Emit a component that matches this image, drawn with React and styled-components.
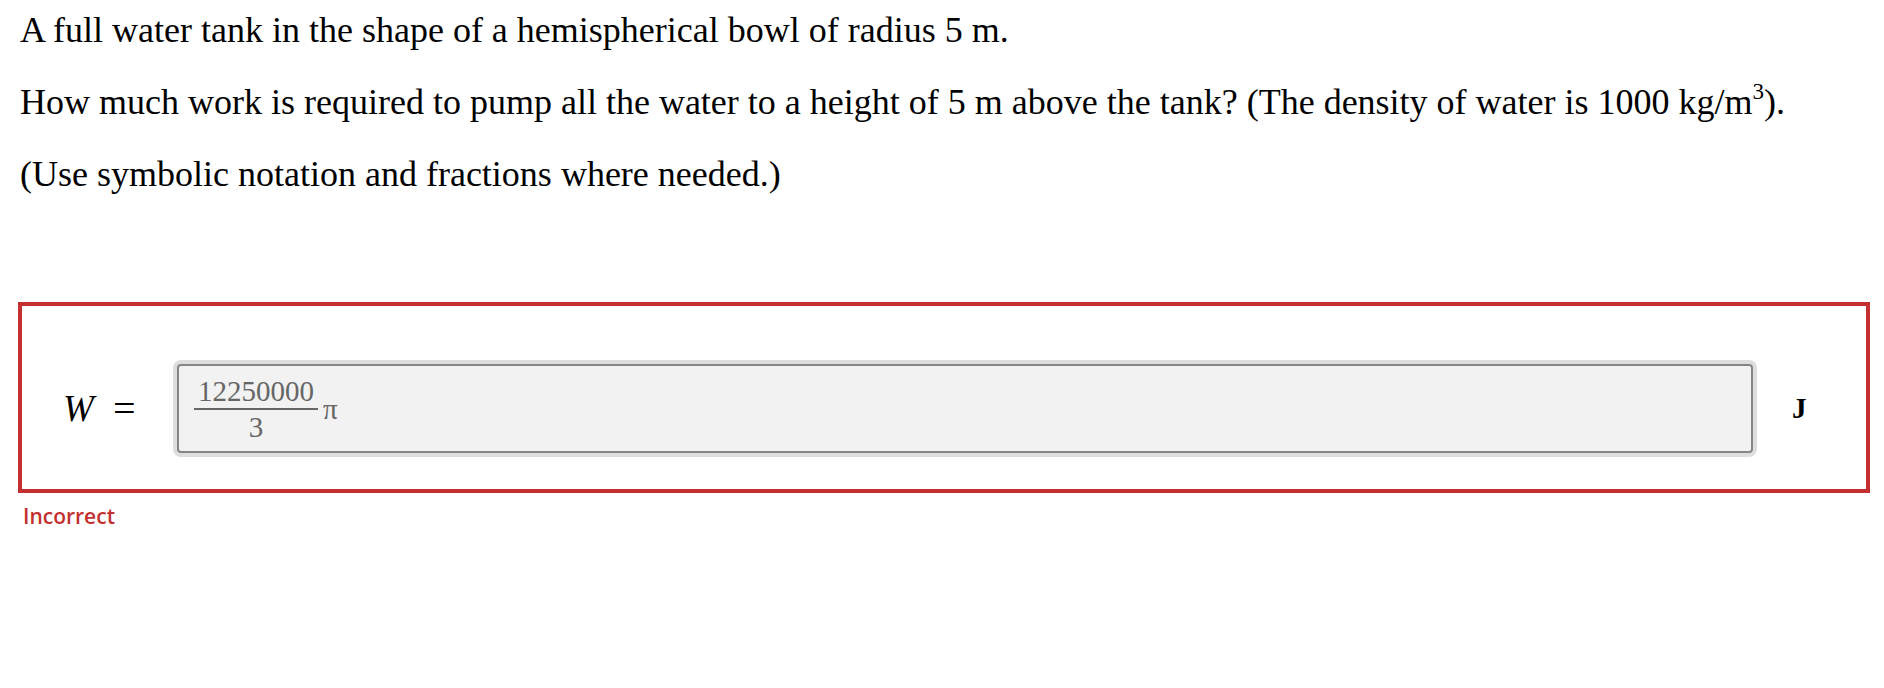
import styled, { createGlobalStyle } from "styled-components";

const GlobalStyle = createGlobalStyle`
  html, body {
    margin: 0;
    padding: 0;
    background: #fff;
  }
`;

const Page = styled.main`
  padding: 10px 14px 40px 18px;
  font-family: "Liberation Serif", "Times New Roman", serif;
  color: #000;
`;

const Question = styled.p`
  margin: 0 0 32px 2px;
  font-size: 36px;
  line-height: 40px;

  sup {
    font-size: 23px;
    line-height: 0;
    vertical-align: 15px;
  }
`;

const AnswerBox = styled.section`
  margin-top: 108px;
  border: 4px solid #c3302f;
  padding: 58px 0 36px 41px;
  display: flex;
  align-items: center;
`;

const MathLabel = styled.span`
  font-size: 37px;
  font-style: italic;
  width: 50px;
`;

const Equals = styled.span`
  font-size: 40px;
  width: 60px;
`;

const InputField = styled.div`
  flex: 1;
  height: 89px;
  box-sizing: border-box;
  background: #f2f2f2;
  border: 2px solid #858585;
  border-radius: 4px;
  box-shadow: 0 0 0 4px #dedede;
  margin: 0 4px;
  padding: 0 0 0 15px;
  display: flex;
  align-items: center;
  color: #666;
`;

const Fraction = styled.span`
  display: inline-flex;
  flex-direction: column;
  align-items: center;
  font-size: 29px;
  line-height: 30px;
`;

const Numerator = styled.span`
  padding: 0 4px 2px;
  border-bottom: 2px solid #666;
`;

const Denominator = styled.span`
  padding-top: 2px;
`;

const Pi = styled.span`
  font-size: 29px;
  margin-left: 5px;
  margin-top: 2px;
`;

const Unit = styled.span`
  font-size: 29px;
  font-weight: bold;
  width: 74px;
  padding-left: 35px;
`;

const Feedback = styled.div`
  margin: 9px 0 0 5px;
  font-family: "Open Sans", "Liberation Sans", sans-serif;
  font-weight: 600;
  font-size: 21px;
  color: #c3302f;
`;

export default function App() {
  return (
    <>
      <GlobalStyle />
      <Page>
        <Question>
          A full water tank in the shape of a hemispherical bowl of radius 5 m.
        </Question>
        <Question>
          How much work is required to pump all the water to a height of 5 m
          above the tank? (The density of water is 1000 kg/m<sup>3</sup>).
        </Question>
        <Question>(Use symbolic notation and fractions where needed.)</Question>
        <AnswerBox>
          <MathLabel>W</MathLabel>
          <Equals>=</Equals>
          <InputField>
            <Fraction>
              <Numerator>12250000</Numerator>
              <Denominator>3</Denominator>
            </Fraction>
            <Pi>π</Pi>
          </InputField>
          <Unit>J</Unit>
        </AnswerBox>
        <Feedback>Incorrect</Feedback>
      </Page>
    </>
  );
}
